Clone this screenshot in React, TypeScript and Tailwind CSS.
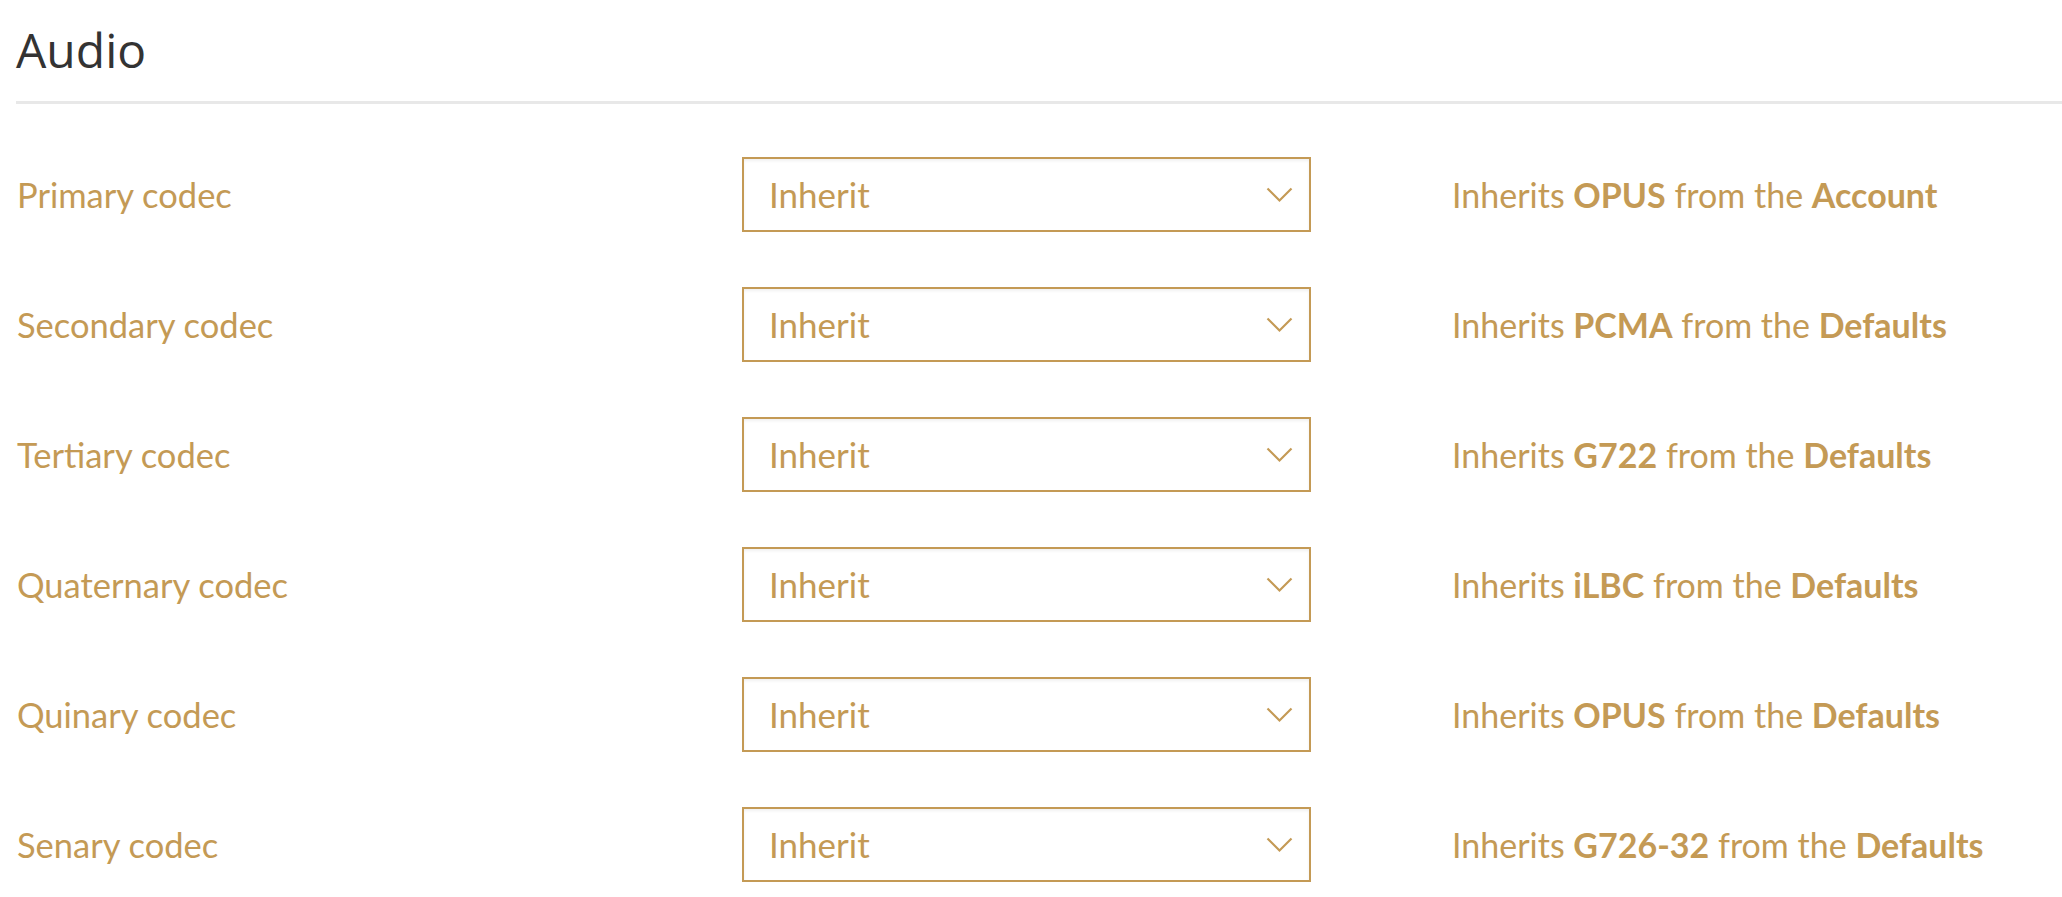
import React from "react";

const rows: { label: string; codec: string; source: string }[] = [
  { label: "Primary codec", codec: "OPUS", source: "Account" },
  { label: "Secondary codec", codec: "PCMA", source: "Defaults" },
  { label: "Tertiary codec", codec: "G722", source: "Defaults" },
  { label: "Quaternary codec", codec: "iLBC", source: "Defaults" },
  { label: "Quinary codec", codec: "OPUS", source: "Defaults" },
  { label: "Senary codec", codec: "G726-32", source: "Defaults" },
];

function Chevron() {
  return (
    <svg width="27" height="16" viewBox="0 0 27 16" fill="none" className="shrink-0">
      <path d="M1.5 1.5 L13.5 13.5 L25.5 1.5" stroke="#c49a55" strokeWidth="2.2" />
    </svg>
  );
}

export default function App() {
  return (
    <div className="w-[2062px] h-[897px] bg-white overflow-hidden pl-[16px]">
      <div className="border-b-[3px] border-[#e8e8e8] pt-[26px] pb-[27px]">
        <h1
          className="text-[48px] leading-[48px] text-[#333333] font-normal"
          style={{ fontFamily: '"Open Sans", "Noto Sans", sans-serif' }}
        >
          Audio
        </h1>
      </div>
      <div
        className="mt-[53px] flex flex-col gap-[55px] text-[#c49a55] text-[34px]"
        style={{ fontFamily: 'Lato, "Open Sans", sans-serif' }}
      >
        {rows.map((r) => (
          <div key={r.label} className="flex items-center h-[75px]">
            <div className="w-[726px] pl-[1px] text-[34.5px]">{r.label}</div>
            <div className="w-[569px] h-[75px] border-2 border-[#c49a55] flex items-center justify-between pl-[25px] pr-[16px] shadow-[inset_0_2px_3px_rgba(0,0,0,0.06)]">
              <span className="text-[35px]">Inherit</span>
              <Chevron />
            </div>
            <div className="ml-[141px] whitespace-nowrap">
              Inherits <span className="font-bold">{r.codec}</span> from the{" "}
              <span className="font-bold">{r.source}</span>
            </div>
          </div>
        ))}
      </div>
    </div>
  );
}
